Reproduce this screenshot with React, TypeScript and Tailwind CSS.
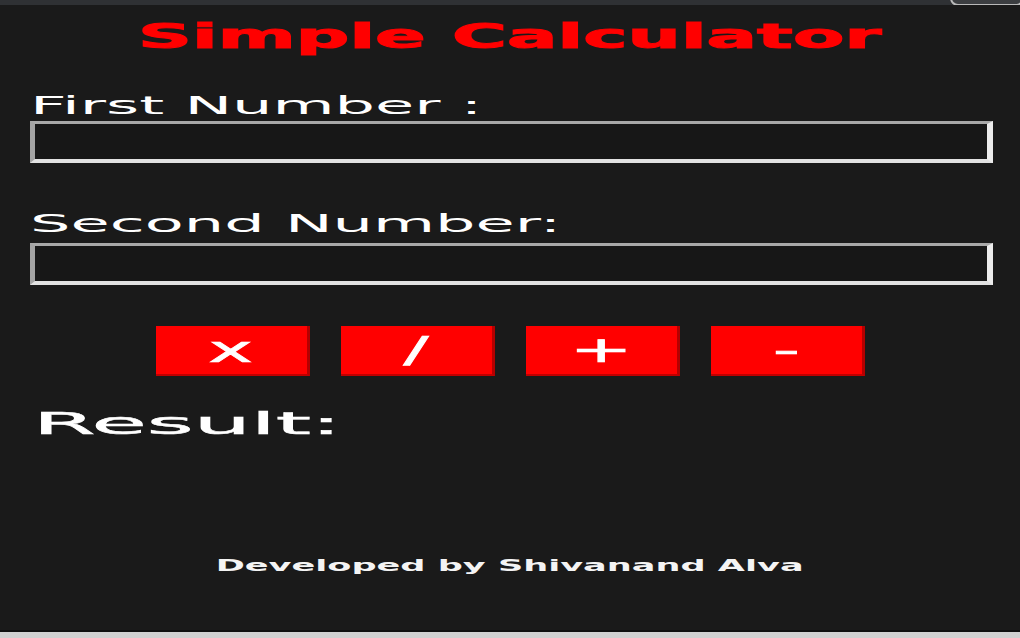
import React, { useState } from 'react';

type Op = 'x' | '/' | '+' | '-';

const ops: Op[] = ['x', '/', '+', '-'];

const fieldClass =
  'block w-full h-[42px] bg-[#171717] text-white px-2 outline-none border-solid border-l-[5px] border-t-[3px] border-r-[6px] border-b-[4px] border-l-[#a3a3a3] border-t-[#a8a8a8] border-r-[#ececec] border-b-[#e2e2e2] font-["DejaVu_Sans",sans-serif] text-[20px]';

export default function App() {
  const [first, setFirst] = useState('');
  const [second, setSecond] = useState('');
  const [result, setResult] = useState('');

  const calc = (op: Op) => {
    const a = parseFloat(first);
    const b = parseFloat(second);
    if (isNaN(a) || isNaN(b)) {
      setResult('');
      return;
    }
    let r = 0;
    if (op === 'x') r = a * b;
    if (op === '/') r = a / b;
    if (op === '+') r = a + b;
    if (op === '-') r = a - b;
    setResult(String(r));
  };

  return (
    <div className="w-full h-[638px] bg-[#1a1a1a] flex flex-col overflow-hidden font-['DejaVu_Sans',sans-serif]">
      {/* window strip on top */}
      <div className="h-[5px] bg-[#2f3134] flex justify-end overflow-hidden shrink-0">
        <div className="w-[74px] h-[16px] -mt-[10px] -mr-[4px] rounded-full border-2 border-[#b9b9b9] bg-[#3c3e41]" />
      </div>

      <div className="flex-1 flex flex-col">
        {/* heading */}
        <div className="mt-[15px] text-center leading-none">
          <h1 className="inline-block scale-x-[2.27] text-[33px] leading-none font-bold text-[#ff0000] [-webkit-text-stroke:1px_#ff0000] font-['DejaVu_Sans',sans-serif]">
            Simple Calculator
          </h1>
        </div>

        {/* inputs */}
        <div className="pl-[30px] pr-[27px]">
          <label className="block mt-[40px] leading-none">
            <span className="inline-block origin-left scale-x-[2.55] text-[25px] leading-none text-white">
              First Number :
            </span>
          </label>
          <input
            type="text"
            value={first}
            onChange={(e) => setFirst(e.target.value)}
            className={`mt-[3px] ${fieldClass}`}
          />

          <label className="block mt-[48px] leading-none">
            <span className="inline-block origin-left scale-x-[2.55] text-[25px] leading-none text-white">
              Second Number:
            </span>
          </label>
          <input
            type="text"
            value={second}
            onChange={(e) => setSecond(e.target.value)}
            className={`mt-[7px] ${fieldClass}`}
          />
        </div>

        {/* operator buttons */}
        <div className="mt-[41px] flex justify-center gap-[31px]">
          {ops.map((op) => (
            <button
              key={op}
              onClick={() => calc(op)}
              className="w-[154px] h-[50px] bg-[#ff0000] border-solid border-r-[3px] border-b-[2px] border-r-[#b50000] border-b-[#c00000] flex items-center justify-center"
            >
              <span className="inline-block scale-x-[2.1] text-[36px] leading-none text-white [-webkit-text-stroke:0.6px_#ffffff]">
                {op}
              </span>
            </button>
          ))}
        </div>

        {/* result */}
        <div className="mt-[33px] pl-[33px] leading-none">
          <span className="inline-block origin-left scale-x-[3] text-[30px] leading-none text-white [-webkit-text-stroke:0.5px_#ffffff]">
            Result:{result && ` ${result}`}
          </span>
        </div>

        {/* footer */}
        <div className="mt-[119px] text-center leading-none">
          <span className="inline-block scale-x-[2.34] text-[15px] leading-none font-bold text-[#f4f4f4]">
            Developed by Shivanand Alva
          </span>
        </div>
      </div>

      {/* bottom edge */}
      <div className="h-[2px] bg-[#0e0e0e] shrink-0" />
      <div className="h-[6px] bg-[#cfcfcf] shrink-0" />
    </div>
  );
}
